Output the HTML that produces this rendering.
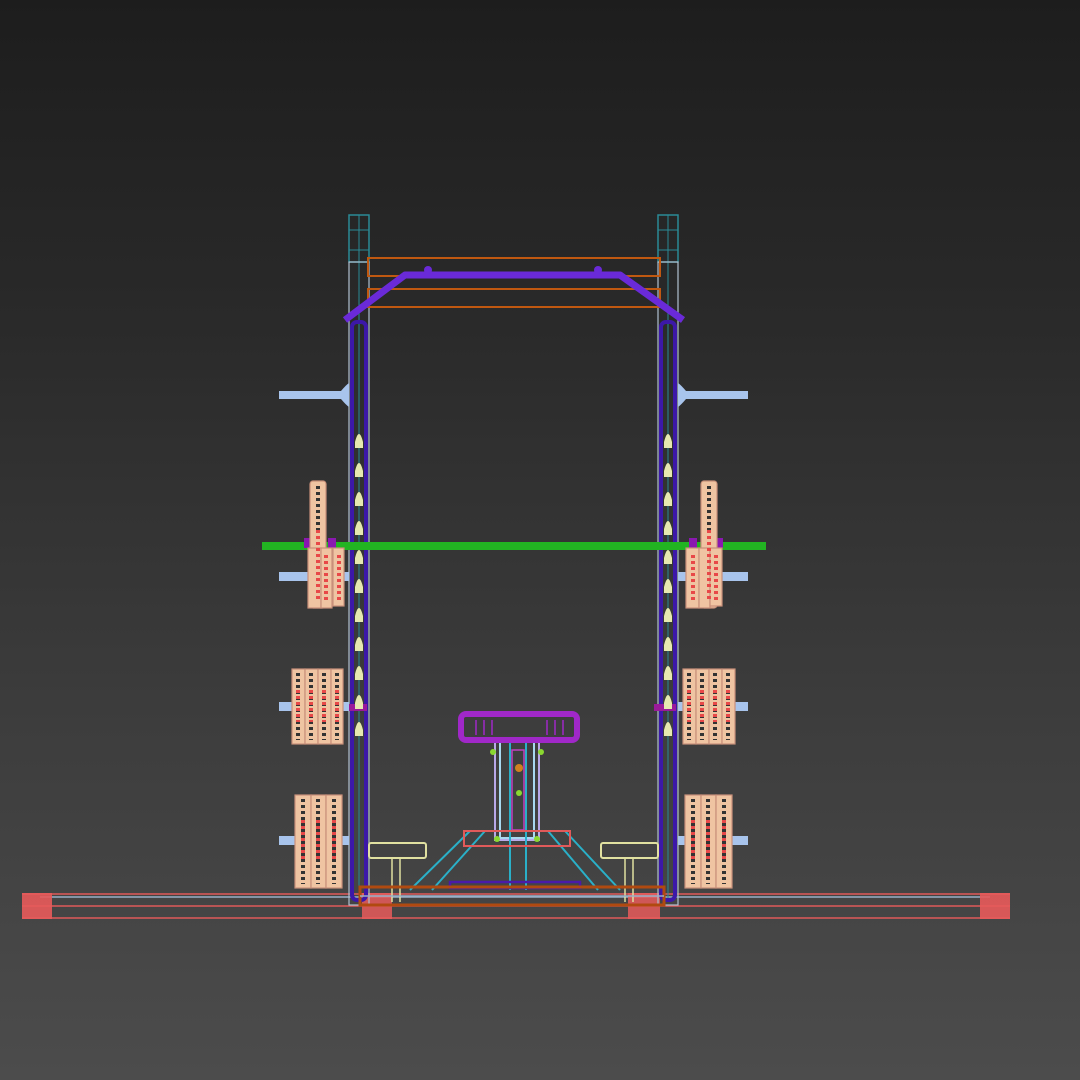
<!DOCTYPE html>
<html><head><meta charset="utf-8"><style>
html,body{margin:0;padding:0;width:1080px;height:1080px;overflow:hidden}
body{background:linear-gradient(#1d1d1d 0%,#2a2a2a 30%,#3c3c3c 65%,#4c4c4c 100%)}
svg{position:absolute;left:0;top:0}
</style></head><body>
<svg width="1080" height="1080" viewBox="0 0 1080 1080">
<defs>
<g id="hooks">
<g fill="#e6e8b0">
<path d="M355 442 q4-16 8 0 v6 h-8z"/><path d="M355 471 q4-16 8 0 v6 h-8z"/><path d="M355 500 q4-16 8 0 v6 h-8z"/><path d="M355 529 q4-16 8 0 v6 h-8z"/><path d="M355 558 q4-16 8 0 v6 h-8z"/><path d="M355 587 q4-16 8 0 v6 h-8z"/><path d="M355 616 q4-16 8 0 v6 h-8z"/><path d="M355 645 q4-16 8 0 v6 h-8z"/><path d="M355 674 q4-16 8 0 v6 h-8z"/><path d="M355 703 q4-16 8 0 v6 h-8z"/><path d="M355 730 q4-16 8 0 v6 h-8z"/>
</g>
</g>
<g id="post">
<rect x="349" y="215" width="20" height="47" fill="none" stroke="#2a8a96" stroke-width="1.5"/>
<line x1="359" y1="215" x2="359" y2="900" stroke="#2a8a96" stroke-width="1"/>
<line x1="349" y1="230" x2="369" y2="230" stroke="#2a8a96"/><line x1="349" y1="250" x2="369" y2="250" stroke="#2a8a96"/>
<rect x="349" y="262" width="20" height="643" fill="none" stroke="#b0c0d0" stroke-width="1.2"/>
<rect x="352" y="322" width="14" height="578" rx="5" fill="none" stroke="#3c18a8" stroke-width="4"/>
<rect x="345" y="704" width="22" height="7" fill="#9a1a9a"/>
<use href="#hooks"/>
</g>
<g id="side">
<path d="M279 391 h62 q5 -6 8 -8 v24 q-3 -2 -8 -8 h-62z" fill="#a8c4ec"/>
<rect x="279" y="572" width="70" height="9" fill="#a8c4ec"/>
<rect x="279" y="702" width="70" height="9" fill="#a8c4ec"/>
<rect x="279" y="836" width="70" height="9" fill="#a8c4ec"/>
</g>
</defs>

<g stroke="#e05a5a" stroke-width="1.5" fill="none">
<line x1="22" y1="894" x2="1010" y2="894"/>
<line x1="22" y1="906" x2="1010" y2="906"/>
<line x1="22" y1="918" x2="1010" y2="918"/>
</g>
<line x1="40" y1="897" x2="990" y2="897" stroke="#9ab0c8" stroke-width="1.5"/>
<rect x="22" y="893" width="30" height="26" fill="#e85a5a" opacity=".9"/>
<rect x="980" y="893" width="30" height="26" fill="#e85a5a" opacity=".9"/>
<rect x="362" y="893" width="30" height="26" fill="#e85a5a" opacity=".85"/>
<rect x="628" y="893" width="32" height="26" fill="#e85a5a" opacity=".85"/>

<use href="#post"/>
<use href="#post" transform="translate(309,0)"/>

<g stroke="#c05810" stroke-width="2" fill="none">
<rect x="368" y="258" width="292" height="18"/>
<rect x="368" y="289" width="292" height="18"/>
</g>
<path d="M345 320 L405 275 H620 L683 320" stroke="#6a2ad8" stroke-width="7" fill="none" stroke-linejoin="round"/>
<circle cx="428" cy="270" r="4" fill="#6a2ad8"/><circle cx="598" cy="270" r="4" fill="#6a2ad8"/>

<use href="#side"/>
<use href="#side" transform="translate(1027,0) scale(-1,1)"/>

<rect x="262" y="542" width="504" height="8" fill="#22b422"/>
<rect x="304" y="538" width="8" height="10" fill="#8a18b0"/><rect x="328" y="538" width="8" height="10" fill="#8a18b0"/>
<rect x="689" y="538" width="8" height="10" fill="#8a18b0"/><rect x="715" y="538" width="8" height="10" fill="#8a18b0"/>

<g fill="#efc4a2" stroke="#c8907a" stroke-width="1.2">
<rect x="310" y="481" width="16" height="127" rx="3"/>
<rect x="308" y="548" width="13" height="60"/><rect x="321" y="548" width="11" height="60"/><rect x="333" y="548" width="11" height="58"/>
<rect x="292" y="669" width="13" height="75"/><rect x="305" y="669" width="13" height="75"/><rect x="318" y="669" width="13" height="75"/><rect x="331" y="669" width="12" height="75"/>
<rect x="295" y="795" width="16" height="93"/><rect x="311" y="795" width="15" height="93"/><rect x="326" y="795" width="16" height="93"/>
<rect x="701" y="481" width="16" height="127" rx="3"/>
<rect x="686" y="548" width="13" height="60"/><rect x="699" y="548" width="11" height="60"/><rect x="710" y="548" width="12" height="58"/>
<rect x="683" y="669" width="13" height="75"/><rect x="696" y="669" width="13" height="75"/><rect x="709" y="669" width="13" height="75"/><rect x="722" y="669" width="13" height="75"/>
<rect x="685" y="795" width="16" height="93"/><rect x="701" y="795" width="15" height="93"/><rect x="716" y="795" width="16" height="93"/>
</g>
<g stroke-width="4" stroke-dasharray="3 3" fill="none">
<g stroke="#333"><line x1="318" y1="486" x2="318" y2="530"/><line x1="709" y1="486" x2="709" y2="530"/>
<line x1="298" y1="673" x2="298" y2="740"/><line x1="311" y1="673" x2="311" y2="740"/><line x1="324" y1="673" x2="324" y2="740"/><line x1="337" y1="673" x2="337" y2="740"/>
<line x1="689" y1="673" x2="689" y2="740"/><line x1="702" y1="673" x2="702" y2="740"/><line x1="715" y1="673" x2="715" y2="740"/><line x1="728" y1="673" x2="728" y2="740"/>
<line x1="303" y1="799" x2="303" y2="884"/><line x1="318" y1="799" x2="318" y2="884"/><line x1="334" y1="799" x2="334" y2="884"/>
<line x1="693" y1="799" x2="693" y2="884"/><line x1="708" y1="799" x2="708" y2="884"/><line x1="724" y1="799" x2="724" y2="884"/></g>
<g stroke="#e84848"><line x1="298" y1="690" x2="298" y2="722"/><line x1="311" y1="690" x2="311" y2="722"/><line x1="324" y1="690" x2="324" y2="722"/><line x1="337" y1="690" x2="337" y2="722"/>
<line x1="689" y1="690" x2="689" y2="722"/><line x1="702" y1="690" x2="702" y2="722"/><line x1="715" y1="690" x2="715" y2="722"/><line x1="728" y1="690" x2="728" y2="722"/>
<line x1="303" y1="820" x2="303" y2="862"/><line x1="318" y1="820" x2="318" y2="862"/><line x1="334" y1="820" x2="334" y2="862"/>
<line x1="693" y1="820" x2="693" y2="862"/><line x1="708" y1="820" x2="708" y2="862"/><line x1="724" y1="820" x2="724" y2="862"/>
<line x1="318" y1="530" x2="318" y2="600"/><line x1="709" y1="530" x2="709" y2="600"/><line x1="326" y1="555" x2="326" y2="600"/><line x1="339" y1="555" x2="339" y2="600"/><line x1="693" y1="555" x2="693" y2="600"/><line x1="716" y1="555" x2="716" y2="600"/></g>
</g>

<g fill="none">
<path d="M410 890 L470 831 M432 890 L485 831 M598 890 L548 831 M620 890 L565 831" stroke="#2ab0c8" stroke-width="2"/>
<rect x="495" y="738" width="44" height="102" stroke="#b8a8e8" stroke-width="2"/>
<rect x="500" y="742" width="34" height="96" stroke="#a8d8f0" stroke-width="2"/>
<path d="M510 740 V890 M526 740 V890" stroke="#2ab0c8" stroke-width="2"/>
<rect x="512" y="750" width="12" height="80" stroke="#c040c0" stroke-width="1.5"/>
<circle cx="519" cy="768" r="4" fill="#d08020"/>
<rect x="464" y="831" width="106" height="15" stroke="#e05a5a" stroke-width="2"/>
<rect x="461" y="714" width="116" height="26" rx="5" stroke="#a028c8" stroke-width="6"/>
<path d="M476 720 V735 M484 720 V735 M492 720 V735 M547 720 V735 M555 720 V735 M563 720 V735" stroke="#a028c8" stroke-width="1.5"/>
<rect x="369" y="843" width="57" height="15" rx="2" stroke="#e0e0a0" stroke-width="2"/>
<rect x="601" y="843" width="57" height="15" rx="2" stroke="#e0e0a0" stroke-width="2"/>
<path d="M392 858 V902 M400 858 V902 M625 858 V902 M633 858 V902" stroke="#e0e0a0" stroke-width="1.5"/>
<rect x="450" y="882" width="130" height="6" stroke="#4a1aa8" stroke-width="2.5"/>
</g>
<g fill="#8ad830"><circle cx="493" cy="752" r="3"/><circle cx="541" cy="752" r="3"/><circle cx="519" cy="793" r="3"/><circle cx="497" cy="839" r="3"/><circle cx="537" cy="839" r="3"/></g>
<rect x="360" y="887" width="304" height="18" fill="none" stroke="#b04a10" stroke-width="3"/>
<line x1="360" y1="896" x2="664" y2="896" stroke="#9ab0c8" stroke-width="1.5"/>
</svg>
</body></html>
